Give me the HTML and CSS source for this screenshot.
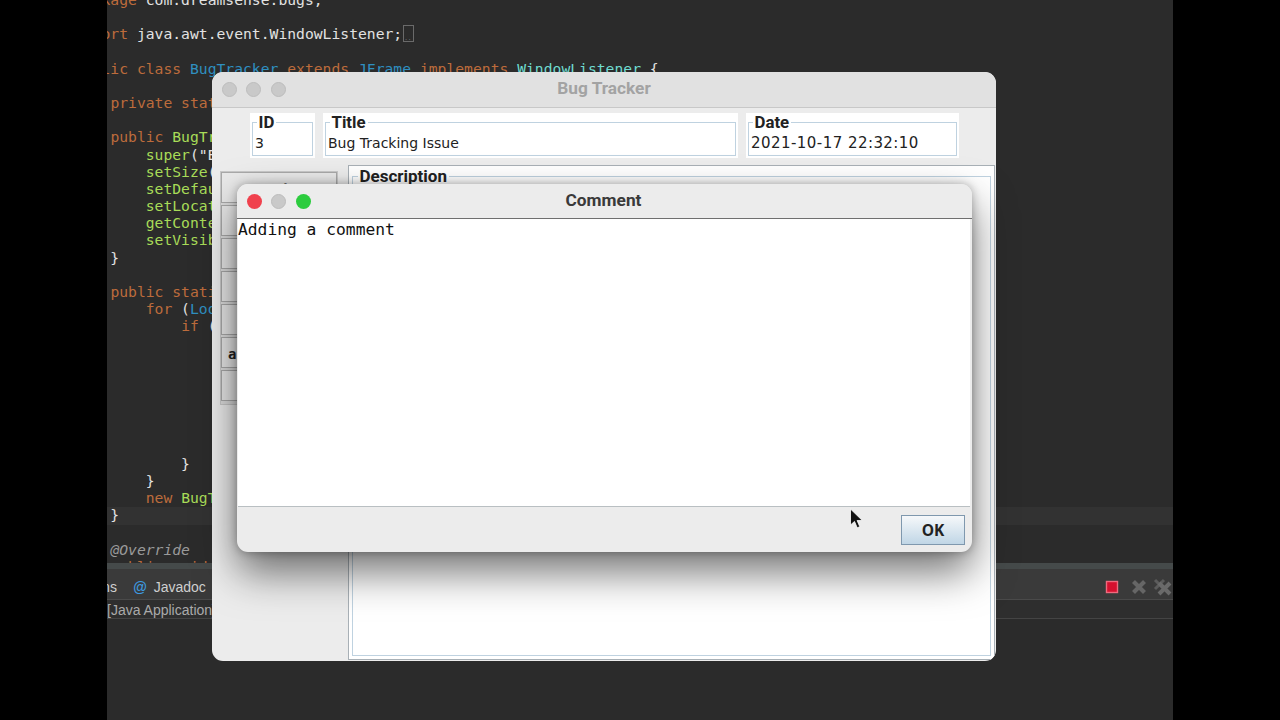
FILE: index.html
```html
<!DOCTYPE html>
<html lang="en">
<head>
<meta charset="utf-8">
<title>Bug Tracker</title>
<link rel="stylesheet" href="styles.css">
</head>
<body>
<main class="editor">
  <pre class="code"><span class="kw">package</span> com.dreamsense.bugs;

<span class="kw">import</span> java.awt.event.WindowListener;<span class="fold">..</span>

<span class="kw">public class</span> <span class="type">BugTracker</span> <span class="kw">extends</span> <span class="type">JFrame</span> <span class="kw">implements</span> <span class="iface">WindowListener</span> {

    <span class="kw">private stat</span>

    <span class="kw">public</span> <span class="fn">BugTr</span>
        <span class="fn">super</span>("B
        <span class="fn">setSize</span>(
        <span class="fn">setDefau</span>
        <span class="fn">setLocat</span>
        <span class="fn">getConte</span>
        <span class="fn">setVisib</span>
    }

    <span class="kw">public stati</span>
        <span class="kw">for</span> (<span class="type">Loo</span>
            <span class="kw">if</span> (







            }
        }
        <span class="kw">new</span> <span class="fn">BugT</span>
    }

    <span class="note">@Override</span>
    <span class="kw">public void</span></pre>
  <div class="console">
    <div class="tabs">
      <span class="tab-clipped">Problems</span>
      <span class="at">@</span>
      <span>Javadoc</span>
      <span class="tools">
        <svg viewBox="0 0 14 14" width="14" height="14"><rect x="1.5" y="1.5" width="11" height="11" fill="#d5102e" stroke="#ef6a7e" stroke-width="1.4"/></svg>
        <svg viewBox="0 0 18 18" width="18" height="18"><path d="M3.5 3.5l11 11M14.5 3.5l-11 11" stroke="#666" stroke-width="4.2"/></svg>
        <svg class="close-all" viewBox="0 0 22 18" width="22" height="18"><path d="M2 2l9 9M11 2l-9 9" stroke="#5c5c5c" stroke-width="3"/><path d="M6 5l11 11M17 5L6 16" stroke="#6a6a6a" stroke-width="4"/></svg>
      </span>
    </div>
    <div class="status">[Java Application]</div>
  </div>
</main>

<section class="window tracker">
  <header class="titlebar titlebar-back">
    <span class="lights"><i class="light idle"></i><i class="light idle"></i><i class="light idle"></i></span>
    <h1>Bug Tracker</h1>
  </header>
  <div class="fields">
    <div class="field field-id"><fieldset><legend>ID</legend><span>3</span></fieldset></div>
    <div class="field field-title"><fieldset><legend>Title</legend><span>Bug Tracking Issue</span></fieldset></div>
    <div class="field field-date"><fieldset><legend>Date</legend><span class="date">2021-10-17 22:32:10</span></fieldset></div>
  </div>
  <div class="content">
    <ul class="list">
      <li class="row"><b class="dot">.</b></li>
      <li class="row"></li>
      <li class="row"></li>
      <li class="row"></li>
      <li class="row"></li>
      <li class="row"><b>a</b></li>
      <li class="row"></li>
    </ul>
    <div class="description">
      <fieldset><legend>Description</legend></fieldset>
    </div>
  </div>
</section>

<section class="window dialog">
  <header class="titlebar">
    <span class="lights"><i class="light red"></i><i class="light idle"></i><i class="light green"></i></span>
    <h2>Comment</h2>
  </header>
  <div class="textarea">Adding a comment</div>
  <footer class="footer"><button class="ok" type="button">OK</button></footer>
</section>

<svg class="cursor" viewBox="0 0 14 22" width="14" height="22"><path d="M1.5 1v16l4-3.6 2.7 6.4 2.6-1.1-2.7-6.2h5.2z" fill="#111" stroke="#fff" stroke-width=".8"/></svg>
</body>
</html>
```
FILE: styles.css
```css
* { box-sizing: border-box; }
html, body { margin: 0; height: 100%; }
body {
  width: 1280px;
  height: 720px;
  overflow: hidden;
  background: #000;
  position: relative;
  font-family: "DejaVu Sans", sans-serif;
}
.editor {
  position: absolute;
  left: 107px;
  top: 0;
  width: 1066px;
  height: 720px;
  background: #2b2b2b;
  overflow: hidden;
  display: flex;
  flex-direction: column;
}
.code {
  margin: -9px 0 0 -32px;
  height: 572px;
  flex: none;
  overflow: hidden;
  font: 14.7px/17.17px "DejaVu Sans Mono", monospace;
  color: #e2e2e2;
  white-space: pre;
  background: linear-gradient(#323232, #323232) 0 515.5px / 100% 18px no-repeat;
}
.kw { color: #bd6c3c; }
.type { color: #2f8fc0; }
.iface { color: #6fdcd0; }
.fn { color: #a8dc58; }
.note { color: #9a9a9a; font-style: italic; }
.fold {
  display: inline-block;
  width: 11px;
  height: 17px;
  margin-left: 1px;
  border: 1px solid #6a6a6a;
  color: #777;
  font-size: 6px;
  line-height: 24px;
  vertical-align: -3px;
  overflow: hidden;
}
.console { flex: none; border-top: 6px solid #454a4a; }
.tabs {
  height: 31px;
  padding-top: 5px;
  background: #3a3a3a;
  border-bottom: 1px solid #4a4a4a;
  display: flex;
  align-items: center;
  color: #cfcfcf;
  font: 14px "Liberation Sans", sans-serif;
}
.tab-clipped { margin-left: -50px; width: 60px; text-align: right; }
.at { color: #3d9be0; font-weight: 700; font-style: italic; margin: 0 7px 0 16px; }
.tools { margin-left: auto; display: flex; align-items: center; gap: 11px; margin-right: -2px; }
.close-all { margin-left: -5.5px; }
.status {
  height: 19px;
  border-bottom: 1px solid #444;
  background: #2e2e2e;
  color: #aaa;
  font: 14px/20px "Liberation Sans", sans-serif;
  white-space: nowrap;
}

.window {
  position: absolute;
  overflow: hidden;
  border-radius: 11px;
  background: #ececec;
}
.tracker { left: 212px; top: 72px; width: 784px; height: 589px; }
.dialog {
  left: 237px;
  top: 184px;
  width: 735px;
  height: 368px;
  box-shadow: 0 20px 42px rgba(0, 0, 0, .55), 0 0 10px rgba(0, 0, 0, .3);
  display: flex;
  flex-direction: column;
  overflow: visible;
}
.titlebar {
  display: grid;
  grid-template-columns: 1fr auto 1fr;
  align-items: center;
  height: 35px;
  padding: 0 9.5px;
  background: #ececec;
  border-bottom: 1px solid #6f6f6f;
  border-radius: 11px 11px 0 0;
  flex: none;
}
.dialog .titlebar { padding-right: 11.5px; }
.titlebar-back {
  height: 36px;
  background: #e1e1e1;
  border-bottom-color: #c8c8c8;
}
.titlebar h1, .titlebar h2 {
  margin: -2px 0 0;
  font: 700 17.3px "Roboto", "Liberation Sans", sans-serif;
  grid-column: 2;
}
.titlebar h1 { color: #a3a3a3; margin-top: -4px; }
.titlebar h2 { color: #3a3a3a; }
.lights { display: flex; gap: 9.5px; grid-column: 1; grid-row: 1; }
.light { width: 15px; height: 15px; border-radius: 50%; display: block; }
.idle { background: #c9c9c9; border: 1px solid #bcbcbc; }
.red { background: #f0414d; }
.green { background: #2ccc3e; }

.fields { display: flex; height: 57px; padding: 5px 0 0 38px; gap: 8px; }
.field { background: #fff; padding: 0 2px 2px; height: 45px; display: flex; flex-direction: column; }
.field-id { width: 65px; }
.field-title { width: 415px; }
.field-date { width: 213px; }
fieldset {
  margin: 0;
  padding: 0 0 0 2px;
  min-width: 0;
  flex: 1;
  border: 1.5px solid #bfd2e0;
}
legend {
  padding: 0 2px;
  margin-left: 1.5px;
  font: 700 16.8px/18px "Roboto", "Liberation Sans", sans-serif;
  color: #222;
}
.field span {
  display: block;
  font: 14px/24px "DejaVu Sans", sans-serif;
  color: #222;
  white-space: nowrap;
}
.field .date { font-size: 15px; letter-spacing: .45px; }
.content { display: flex; height: 496px; }
.list {
  list-style: none;
  margin: 6px 0 0 8px;
  padding: 0 0 2px;
  width: 118px;
  height: 234px;
  background: #dcdcdc;
  display: flex;
  flex-direction: column;
  gap: 2px;
  border: 1px solid #c8c8c8;
  flex: none;
}
.row {
  height: 31px;
  background: #e9e9e9;
  border: 1px solid #a9a9a9;
  font: 700 14px/32px "DejaVu Sans Mono", monospace;
  padding-left: 6px;
  color: #222;
}
.row .dot { display: block; text-align: center; line-height: 17px; margin-left: 7px; }
.description {
  margin-left: 10px;
  width: 647px;
  height: 495px;
  background: #fff;
  border: 1px solid #a8b0b6;
  padding: 1px 3px 3px;
  display: flex;
}
.description legend { font-size: 17px; margin-left: 2.5px; }

.textarea {
  flex: 1;
  margin: 0 2px 0 1px;
  background: #fff;
  border-bottom: 1px solid #b9bfc2;
  padding: 1px 0;
  font: 16.3px/19px "DejaVu Sans Mono", monospace;
  color: #111;
}
.footer {
  height: 45px;
  flex: none;
  display: flex;
  justify-content: flex-end;
  align-items: flex-start;
  padding: 8px 7px 0 0;
  border-radius: 0 0 11px 11px;
}
.ok {
  width: 64px;
  height: 30px;
  padding: 0;
  border: 1px solid #7f98ae;
  border-radius: 0;
  background: linear-gradient(#f6f8fa, #c0d6e6);
  font: 700 15.5px "Open Sans", "DejaVu Sans", sans-serif;
  color: #222;
}
.cursor { position: absolute; left: 849px; top: 508px; }
```
